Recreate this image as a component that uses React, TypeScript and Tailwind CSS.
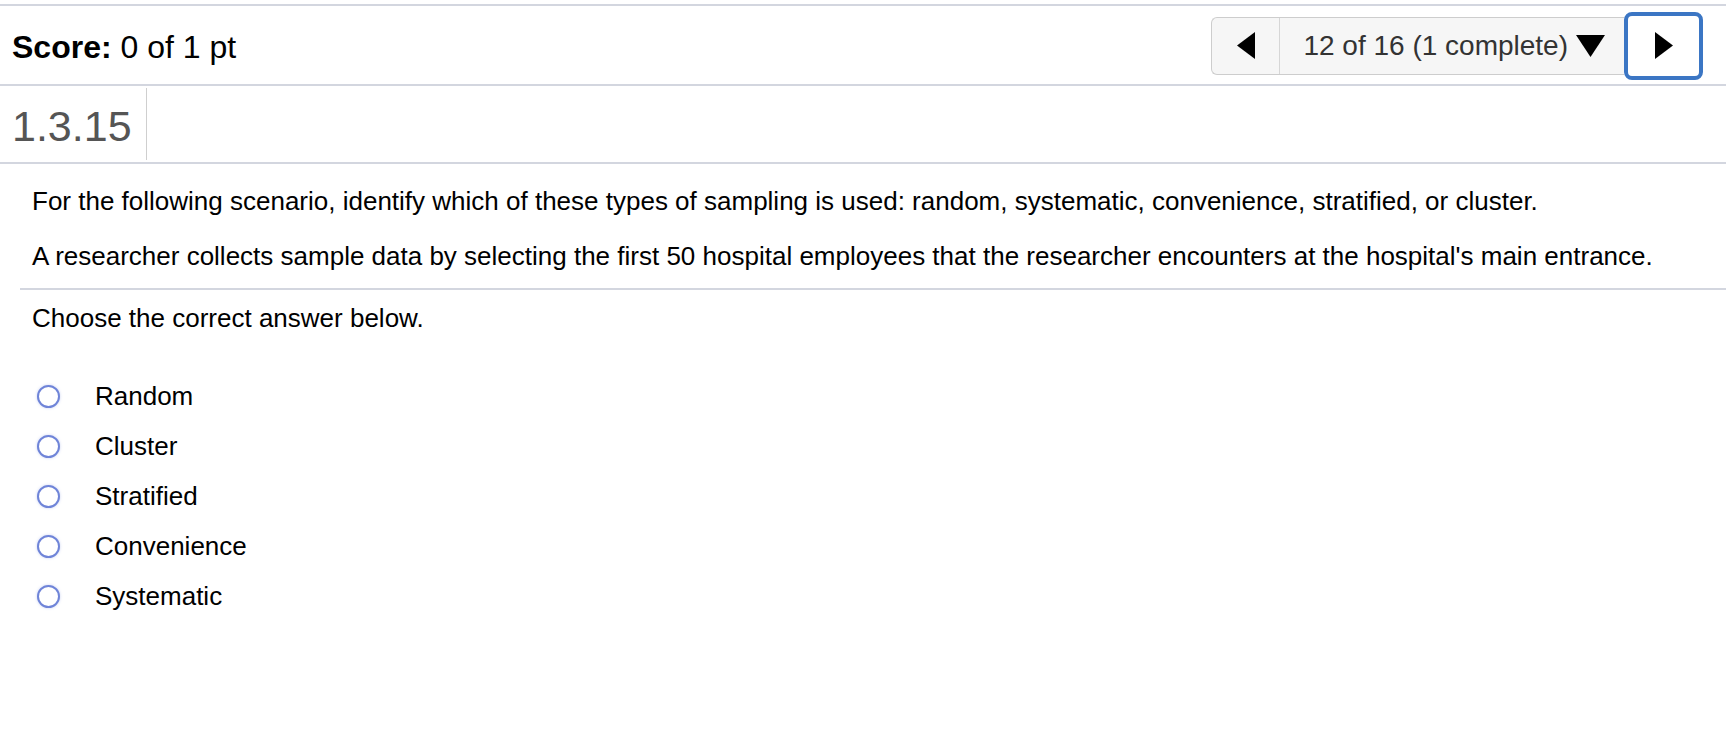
import React from "react";

const options = ["Random", "Cluster", "Stratified", "Convenience", "Systematic"];

function TriLeft() {
  return (
    <svg width="18" height="27" viewBox="0 0 18 27">
      <polygon points="18,0 18,27 0,13.5" fill="#000" />
    </svg>
  );
}

function TriRight() {
  return (
    <svg width="18" height="27" viewBox="0 0 18 27">
      <polygon points="0,0 0,27 18,13.5" fill="#000" />
    </svg>
  );
}

function TriDown() {
  return (
    <svg width="29" height="22" viewBox="0 0 29 22">
      <polygon points="0,0 29,0 14.5,22" fill="#000" />
    </svg>
  );
}

export default function App() {
  return (
    <div
      className="w-full h-[740px] bg-white text-black overflow-hidden"
      style={{ fontFamily: '"Liberation Sans", Arial, Helvetica, sans-serif' }}
    >
      <div className="h-[4px]" />
      <div className="border-t-2 border-[#d3d6df]" />

      {/* score + navigation */}
      <div className="h-[80px] flex items-center justify-between pl-[12px] pr-[23px] border-b-2 border-[#d3d6df]">
        <div className="text-[32px] leading-none pt-[3px]">
          <span className="font-bold">Score:</span> 0 of 1 pt
        </div>
        <div className="flex items-stretch h-[58px] mt-[1px]">
          <div className="flex rounded-l-[6px] border-[1.5px] border-r-0 border-[#cdcdcd] bg-[#f6f6f6]">
            <button className="w-[68px] flex items-center justify-center border-r-[1.5px] border-[#d6d6d6]">
              <TriLeft />
            </button>
            <button className="flex items-center gap-[8px] pl-[23px] pr-[19px] text-[28px] text-[#333]">
              <span>12 of 16 (1 complete)</span>
              <TriDown />
            </button>
          </div>
          <button className="w-[79px] -my-[5px] flex items-center justify-center bg-white rounded-[8px] border-[4px] border-[#3b76c4]">
            <TriRight />
          </button>
        </div>
      </div>

      {/* question id */}
      <div className="h-[78px] flex border-b-2 border-[#d3d6df]">
        <div className="w-[147px] my-[2px] flex items-center pl-[12px] pt-[4px] border-r-[1.5px] border-[#cfcfcf] text-[43px] leading-none text-[#555]">
          1.3.15
        </div>
      </div>

      {/* question body */}
      <div className="pt-[22px] text-[26px] leading-[30px]">
        <p className="pl-[32px]">
          For the following scenario, identify which of these types of sampling is used: random, systematic, convenience, stratified, or cluster.
        </p>
        <p className="pl-[32px] mt-[25px]">
          A researcher collects sample data by selecting the first 50 hospital employees that the researcher encounters at the hospital's main entrance.
        </p>
        <div className="ml-[20px] mt-[17px] border-t-2 border-[#d3d6df]" />
        <p className="pl-[32px] pt-[13px]">Choose the correct answer below.</p>

        <div className="mt-[38px] flex flex-col">
          {options.map((o) => (
            <label key={o} className="h-[50px] flex items-center">
              <span className="ml-[37px] w-[23px] h-[23px] rounded-full border-[2.5px] border-[#6f84d8] bg-white shadow-[0_0_3px_rgba(120,140,220,0.4)]" />
              <span className="ml-[35px]">{o}</span>
            </label>
          ))}
        </div>
      </div>
    </div>
  );
}
